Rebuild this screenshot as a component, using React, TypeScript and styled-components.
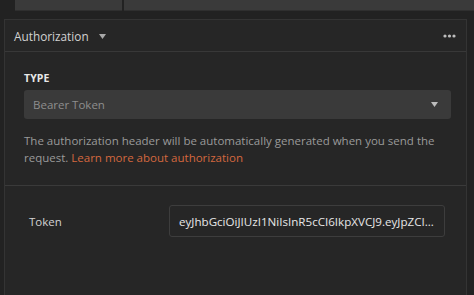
import React from "react";
import styled, { createGlobalStyle } from "styled-components";

const Global = createGlobalStyle`
  html, body { margin: 0; padding: 0; background: #1f1f1f; }
  body { font-family: "Open Sans", "Liberation Sans", sans-serif; }
  #root { width: 474px; height: 295px; overflow: hidden; }
`;

const Page = styled.div`
  width: 474px;
  height: 295px;
  background: #222222;
  display: flex;
  flex-direction: column;
  overflow: hidden;
`;

const TopStrip = styled.div`
  height: 10px;
  display: flex;
  gap: 2px;
  padding-left: 15px;
  flex-shrink: 0;
`;

const StripCell = styled.div<{ $w?: number }>`
  background: #3a3a3a;
  height: 10px;
  ${(p) => (p.$w ? `width: ${p.$w}px;` : "flex: 1;")}
  border-bottom: 1px solid #2f2f2f;
`;

const Panel = styled.div`
  margin: 9px 7px 0 4px;
  border: 1px solid #343434;
  border-bottom: none;
  background: #262626;
  flex: 1;
  display: flex;
  flex-direction: column;
`;

const Header = styled.div`
  height: 31px;
  display: flex;
  align-items: center;
  padding: 0 10px 0 9px;
  border-bottom: 1px solid #383838;
`;

const HeaderTitle = styled.span`
  color: #d2d2d2;
  font-size: 11.8px;
`;

const Caret = styled.svg`
  margin-left: 10px;
  margin-top: 1px;
`;

const Spacer = styled.div`
  flex: 1;
`;

const Body = styled.div`
  padding: 19px 15px 0 19px;
  display: flex;
  flex-direction: column;
  border-bottom: 1px solid #3a3a3a;
  height: 134px;
  box-sizing: border-box;
`;

const Label = styled.div`
  color: #e8e8e8;
  font-size: 10.5px;
  font-weight: 700;
  letter-spacing: 0.1px;
  line-height: 14px;
`;

const Select = styled.div`
  margin-top: 5px;
  height: 29px;
  background: #3a3a3a;
  border-radius: 3px;
  display: flex;
  align-items: center;
  padding: 0 13px 0 9px;
  color: #8e8e8e;
  font-size: 11.5px;
`;

const Desc = styled.p`
  margin: 14px 0 0 0;
  color: #9a9a9a;
  font-size: 11.5px;
  line-height: 16.5px;
`;

const Link = styled.a`
  color: #d4683f;
  text-decoration: none;
`;

const TokenRow = styled.div`
  display: flex;
  align-items: center;
  padding: 19px 0 0 24px;
`;

const TokenLabel = styled.div`
  width: 140px;
  color: #d2d2d2;
  font-size: 11.5px;
`;

const TokenInput = styled.div`
  width: 276px;
  height: 32px;
  box-sizing: border-box;
  border: 1px solid #3d3d3d;
  border-radius: 3px;
  background: #262626;
  display: flex;
  align-items: center;
  padding: 0 10px 0 9px;
  color: #e6e6e6;
  font-size: 11.6px;
  white-space: nowrap;
  overflow: hidden;
`;

const TokenText = styled.span`
  overflow: hidden;
  text-overflow: ellipsis;
  display: block;
  width: 100%;
`;

export default function App() {
  return (
    <>
      <Global />
      <Page>
        <TopStrip>
          <StripCell $w={107} />
          <StripCell />
        </TopStrip>
        <Panel>
          <Header>
            <HeaderTitle>Authorization</HeaderTitle>
            <Caret width="7" height="5" viewBox="0 0 7 5">
              <path d="M0 0 L7 0 L3.5 5 Z" fill="#a8a8a8" />
            </Caret>
            <Spacer />
            <svg width="13" height="4" viewBox="0 0 13 4">
              <circle cx="2" cy="2" r="1.6" fill="#bdbdbd" />
              <circle cx="6.5" cy="2" r="1.6" fill="#bdbdbd" />
              <circle cx="11" cy="2" r="1.6" fill="#bdbdbd" />
            </svg>
          </Header>
          <Body>
            <Label>TYPE</Label>
            <Select>
              Bearer Token
              <Spacer />
              <svg width="7" height="5" viewBox="0 0 7 5">
                <path d="M0 0 L7 0 L3.5 5 Z" fill="#bdbdbd" />
              </svg>
            </Select>
            <Desc>
              The authorization header will be automatically generated when you send the request.{" "}
              <Link href="#">Learn more about authorization</Link>
            </Desc>
          </Body>
          <TokenRow>
            <TokenLabel>Token</TokenLabel>
            <TokenInput>
              <TokenText>eyJhbGciOiJIUzI1NiIsInR5cCI6IkpXVCJ9.eyJpZCI6MTIzNDU2Nzg5MCwibmFtZSI6</TokenText>
            </TokenInput>
          </TokenRow>
        </Panel>
      </Page>
    </>
  );
}
